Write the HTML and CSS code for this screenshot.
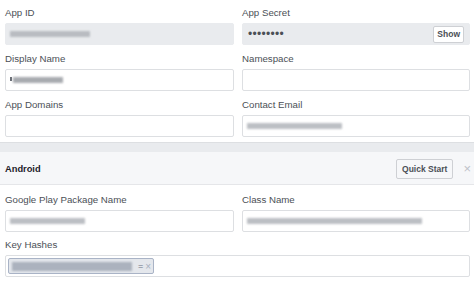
FILE: index.html
```html
<!DOCTYPE html>
<html>
<head>
<meta charset="utf-8">
<link rel="stylesheet" href="styles.css">
</head>
<body>
<div class="page">
  <section class="grid">
    <div class="field">
      <label class="label">App ID</label>
      <div class="input disabled"><span class="blur" style="width:80px"></span></div>
    </div>
    <div class="field">
      <label class="label">App Secret</label>
      <div class="input disabled secret">
        <span class="dots">••••••••</span>
        <button class="btn small">Show</button>
      </div>
    </div>
    <div class="field">
      <label class="label">Display Name</label>
      <div class="input"><span class="tick"></span><span class="blur dark" style="width:50px"></span></div>
    </div>
    <div class="field">
      <label class="label">Namespace</label>
      <div class="input"></div>
    </div>
    <div class="field">
      <label class="label">App Domains</label>
      <div class="input"></div>
    </div>
    <div class="field">
      <label class="label">Contact Email</label>
      <div class="input"><span class="blur" style="width:95px"></span></div>
    </div>
  </section>
  <div class="band"></div>
  <header class="platform">
    <span class="title">Android</span>
    <div class="actions">
      <button class="btn">Quick Start</button>
      <span class="close">×</span>
    </div>
  </header>
  <section class="grid lower">
    <div class="field">
      <label class="label">Google Play Package Name</label>
      <div class="input"><span class="blur" style="width:75px"></span></div>
    </div>
    <div class="field">
      <label class="label">Class Name</label>
      <div class="input"><span class="blur" style="width:175px"></span></div>
    </div>
    <div class="field wide">
      <label class="label">Key Hashes</label>
      <div class="input tokens">
        <span class="token"><span class="blur tokblur" style="width:124px"></span><span class="eq">=</span><span class="tx">×</span></span>
      </div>
    </div>
  </section>
</div>
</body>
</html>
```

FILE: styles.css
```css
* { box-sizing: border-box; }
html, body { margin: 0; padding: 0; background: #fff; }
body {
  font-family: "Liberation Sans", Arial, sans-serif;
  font-size: 9.5px;
  color: #4b4f56;
  width: 474px;
  height: 285px;
  overflow: hidden;
}
.grid {
  display: grid;
  grid-template-columns: 229px 228px;
  column-gap: 8px;
  padding: 0 4px 0 5px;
}
.field {
  padding-top: 6px;
  height: 46px;
}
.field.wide { grid-column: 1 / 3; }
.label {
  display: block;
  line-height: 14px;
  height: 14px;
  margin-bottom: 3px;
  color: #4b4f56;
  font-size: 9.7px;
}
.input {
  height: 22px;
  border: 1px solid #dddfe2;
  border-radius: 2px;
  background: #fff;
  display: flex;
  align-items: center;
  padding: 0 4px;
}
.input.disabled {
  background: #e9ebee;
  border-color: #e9ebee;
}
.blur {
  display: inline-block;
  height: 6px;
  background: #b1b4ba;
  filter: blur(1.1px);
  opacity: 0.85;
}
.blur.dark { background: #9a9da3; }
.tick {
  display: inline-block;
  width: 2px;
  height: 4px;
  background: #6b6f76;
  margin-top: -3px;
  margin-right: 1px;
}
.secret { justify-content: space-between; padding-right: 5px; }
.dots {
  color: #4b4f56;
  font-size: 12px;
  letter-spacing: 0.3px;
  margin-left: 1px;
}
.btn {
  font-family: "Liberation Sans", Arial, sans-serif;
  font-weight: bold;
  font-size: 8.5px;
  color: #4b4f56;
  background: #f6f7f9;
  border: 1px solid #ced0d4;
  border-radius: 2px;
  padding: 0 5px;
  height: 20px;
  line-height: 18px;
}
.btn.small {
  height: 17px;
  line-height: 15px;
  padding: 0 3px;
  background: #fff;
}
.band {
  height: 10px;
  margin-top: 4px;
  background: #e9ebee;
  border-top: 1px solid #dddfe2;
}
.platform {
  height: 33px;
  background: #f6f7f9;
  border-bottom: 1px solid #e5e6e9;
  display: flex;
  align-items: center;
  justify-content: space-between;
  padding: 2px 3px 0 5px;
}
.title {
  font-weight: bold;
  color: #1d2129;
  font-size: 9.3px;
}
.actions { display: flex; align-items: center; gap: 10px; }
.close {
  color: #bec2c9;
  font-size: 13px;
  line-height: 14px;
}
.lower .field:first-child,
.lower .field:nth-child(2) { padding-top: 8px; height: 47px; }
.tokens { padding: 0 2px; }
.token {
  display: flex;
  align-items: center;
  height: 16px;
  background: #e4e7ec;
  border: 1px solid #a9b3c6;
  border-radius: 2px;
  padding: 0 2px;
  width: 146px;
}
.tokblur { height: 9px; background: #a2a9b6; margin-left: 1px; }
.eq { color: #6a7180; font-size: 9px; margin-left: 6px; }
.tx { color: #a8b0c0; font-size: 10px; margin-left: 2px; }
```
